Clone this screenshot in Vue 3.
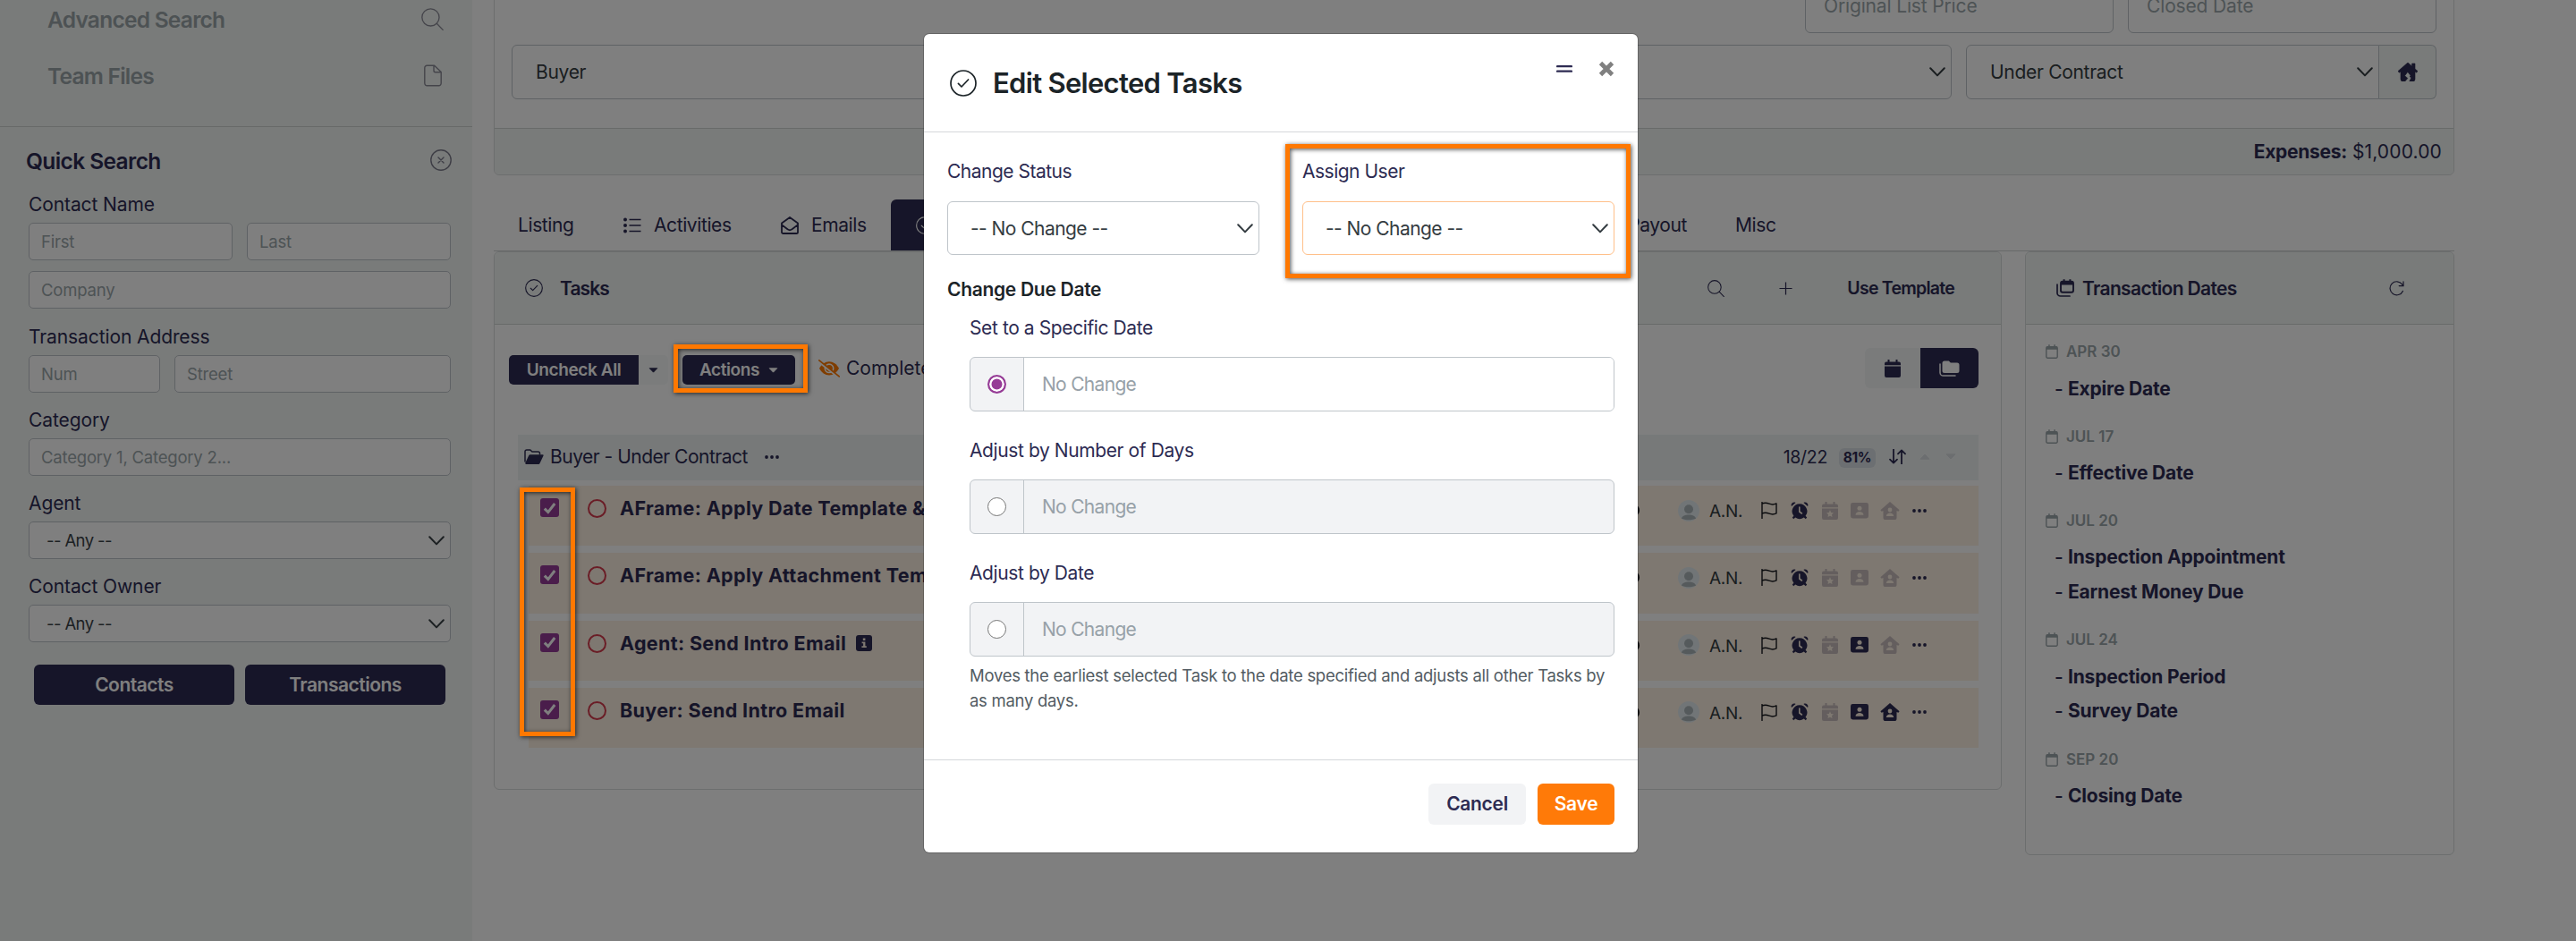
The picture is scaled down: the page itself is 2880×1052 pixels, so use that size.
<script setup>
  import { ref } from 'vue'

  const specificDate = ref('specific')

  const tasks = [
    { name: 'AFrame: Apply Date Template &', info: false, card: false, house: false },
    { name: 'AFrame: Apply Attachment Tem', info: false, card: false, house: false },
    { name: 'Agent: Send Intro Email', info: true, card: true, house: false },
    { name: 'Buyer: Send Intro Email', info: false, card: true, house: true },
  ]

  const dates = [
    { day: 'APR 30', events: ['Expire Date'] },
    { day: 'JUL 17', events: ['Effective Date'] },
    { day: 'JUL 20', events: ['Inspection Appointment', 'Earnest Money Due'] },
    { day: 'JUL 24', events: ['Inspection Period', 'Survey Date'] },
    { day: 'SEP 20', events: ['Closing Date'] },
  ]

  const dueOptions = [
    { id: 'specific', label: 'Set to a Specific Date' },
    { id: 'days', label: 'Adjust by Number of Days' },
    { id: 'date', label: 'Adjust by Date' },
  ]
</script>

<template>
  <div class="app">
    <svg class="sprite">
      <symbol id="search" viewBox="0 0 24 24">
        <g fill="none" stroke="currentColor" stroke-width="1.3" stroke-linecap="round"><circle cx="10" cy="10" r="9.2"/><path d="M16.6 16.6l6.6 6.8"/></g>
      </symbol>
      <symbol id="file" viewBox="0 0 20 24">
        <path d="M4 .8h7.6L19.2 8v12.6a2.6 2.6 0 0 1-2.6 2.6H3.4a2.6 2.6 0 0 1-2.6-2.6V3.4A2.6 2.6 0 0 1 3.4.8zM11 .8v5.6c0 1 .8 1.8 1.8 1.8h6" fill="none" stroke="currentColor" stroke-width="1.4" stroke-linejoin="round"/>
      </symbol>
      <symbol id="circle-x" viewBox="0 0 24 24">
        <g fill="none" stroke="currentColor" stroke-width="1.4" stroke-linecap="round"><circle cx="12" cy="12" r="11.2"/><path d="M9 9l6 6M15 9l-6 6"/></g>
      </symbol>
      <symbol id="circle-check" viewBox="0 0 30 30">
        <g fill="none" stroke="currentColor" stroke-width="1.7" stroke-linecap="round" stroke-linejoin="round"><circle cx="15" cy="15" r="14"/><path d="M9.4 15.4l3.6 3.6 7.6-8"/></g>
      </symbol>
      <symbol id="chevron" viewBox="0 0 18 11">
        <path d="M1.2 1.2L9 9.4l7.8-8.2" fill="none" stroke="currentColor" stroke-width="2" stroke-linecap="round" stroke-linejoin="round"/>
      </symbol>
      <symbol id="caret" viewBox="0 0 12 7"><path d="M1 .8h10L6 6z" fill="currentColor" stroke="currentColor" stroke-linejoin="round"/></symbol>
      <symbol id="home" viewBox="0 0 22 21">
        <path d="M11 0L0 9.6l1.4 1.6L3 10v8.4A2.6 2.6 0 0 0 5.6 21h2.2l3-3.6-3.2-2.6 3.2-4.4 3.4 4.2-1.2.8 1.8 1.6-2 4h3.6a2.6 2.6 0 0 0 2.6-2.6V10l1.6 1.2L22 9.6 19 7V1h-3.4v3z" fill="currentColor" stroke="currentColor" stroke-width=".6" stroke-linejoin="round"/>
      </symbol>
      <symbol id="list" viewBox="0 0 20 18">
        <g fill="currentColor"><circle cx="2" cy="2.5" r="2"/><circle cx="2" cy="9" r="2"/><circle cx="2" cy="15.5" r="2"/></g>
        <path d="M6.5 2.5h13M6.5 9h13M6.5 15.5h13" stroke="currentColor" stroke-width="1.6"/>
      </symbol>
      <symbol id="envelope" viewBox="0 0 20 20">
        <path d="M1 7.6L10 1l9 6.6v9.8a1.6 1.6 0 0 1-1.6 1.6H2.6A1.6 1.6 0 0 1 1 17.4zM1.2 9.6l6.6 4.8c1.3 1 3.1 1 4.4 0l6.6-4.8" fill="none" stroke="currentColor" stroke-width="1.8" stroke-linejoin="round"/>
      </symbol>
      <symbol id="plus" viewBox="0 0 16 16"><path d="M8 .5v15M.5 8h15" stroke="currentColor" stroke-width="1.3"/></symbol>
      <symbol id="calendars" viewBox="0 0 20 20">
        <path d="M7 2.8h10a2 2 0 0 1 2 2v8a2 2 0 0 1-2 2H7a2 2 0 0 1-2-2v-8a2 2 0 0 1 2-2z" fill="none" stroke="currentColor" stroke-width="1.9"/>
        <path d="M5 3h14v3.6H5zM7.6.2h2v3h-2zM14.4.2h2v3h-2z" fill="currentColor"/>
        <path d="M1 6v9.4A3.6 3.6 0 0 0 4.6 19H15" fill="none" stroke="currentColor" stroke-width="1.7" stroke-linecap="round"/>
      </symbol>
      <symbol id="refresh" viewBox="0 0 17 17">
        <path d="M15.4 11.4A7.5 7.5 0 1 1 14.6 3.8L16 5.6M16 .8v4.8h-4.8" fill="none" stroke="currentColor" stroke-width="1.2" stroke-linecap="round"/>
      </symbol>
      <symbol id="calendar" viewBox="0 0 14 16">
        <path d="M2.2 2.6h9.6A1.4 1.4 0 0 1 13.2 4v9.8a1.4 1.4 0 0 1-1.4 1.4H2.2a1.4 1.4 0 0 1-1.4-1.4V4a1.4 1.4 0 0 1 1.4-1.4z" fill="none" stroke="currentColor" stroke-width="1.4"/>
        <path d="M1 2.6h12v3.2H1zM3.2.3h1.5v3H3.2zM9.3.3h1.5v3H9.3z" fill="currentColor"/>
      </symbol>
      <symbol id="calendar-solid" viewBox="0 0 18 20">
        <path d="M0 4.5a2 2 0 0 1 2-2h1.5v-2a.8.8 0 0 1 2 0v2h7v-2a.8.8 0 0 1 2 0v2H16a2 2 0 0 1 2 2v1.8H0zM0 7.5h18V18a2 2 0 0 1-2 2H2a2 2 0 0 1-2-2z" fill="currentColor"/>
      </symbol>
      <symbol id="folders" viewBox="0 0 23 18">
        <path d="M6 .5h4.8l2 2H20A2.5 2.5 0 0 1 22.5 5v6.5A2.5 2.5 0 0 1 20 14H6a2.500 2.500 0 0 1-2.500-2.500V3A2.500 2.500 0 0 1 6 .5z" fill="currentColor"/>
        <path d="M1 4v9.4A3.6 3.6 0 0 0 4.6 17H18" fill="none" stroke="currentColor" stroke-width="1.5" stroke-linecap="round"/>
      </symbol>
      <symbol id="folder-open" viewBox="0 0 22 17">
        <path d="M1 14.500V2.800A1.800 1.800 0 0 1 2.800 1h4L9 3h6.700a1.800 1.800 0 0 1 1.800 1.800v1.600" fill="none" stroke="currentColor" stroke-width="1.5"/>
        <path d="M6.8 6.300h13.900a.9.9 0 0 1 .8 1.300l-4 8.400a1.400 1.400 0 0 1-1.300.9H2.200c-.8 0-1.200-.7-.9-1.400L5.200 7.200a1.700 1.700 0 0 1 1.600-.9z" fill="currentColor"/>
      </symbol>
      <symbol id="dots" viewBox="0 0 16 4"><g fill="currentColor"><circle cx="2" cy="2" r="1.9"/><circle cx="8" cy="2" r="1.9"/><circle cx="14" cy="2" r="1.9"/></g></symbol>
      <symbol id="eye-slash" viewBox="0 0 24 20">
        <path d="M1 9.800C3.500 5 7.500 2.200 12 2.200S20.500 5 23 9.800C20.500 14.700 16.500 17.500 12 17.500S3.500 14.700 1 9.800z" fill="currentColor"/>
        <circle cx="12" cy="9.8" r="4.7" fill="none" stroke="#fff" stroke-width="1.6"/>
        <path d="M0 2.200L22.500 19.800" stroke="#fff" stroke-width="2.4"/>
        <path d="M.8.900L23.200 18.900" stroke="currentColor" stroke-width="1.8" stroke-linecap="round"/>
      </symbol>
      <symbol id="sort" viewBox="0 0 19 17">
        <path d="M5 .5v15M1 11.600l4 4 4-4M14 16.500V1.500M10 5.400l4-4 4 4" fill="none" stroke="currentColor" stroke-width="1.8" stroke-linecap="round" stroke-linejoin="round"/>
      </symbol>
      <symbol id="check" viewBox="0 0 15 14"><path d="M1.800 7.600l4 4L13.200 2" fill="none" stroke="currentColor" stroke-width="3"/></symbol>
      <symbol id="info" viewBox="0 0 18 18">
        <rect width="18" height="18" rx="3" fill="currentColor"/>
        <path d="M7.800 3.600h2.600V6H7.800zM6.600 7.500h3.800v4.800h1.400V14H6.400v-1.700h1.700V9.200H6.600z" fill="#fcf0e2"/>
      </symbol>
      <symbol id="flag" viewBox="0 0 18 19">
        <path d="M1 .5v18M1 2.200c3-1.600 5.400-1 8 0s5 1.200 8-.3v11c-3 1.500-5.400 1.300-8 .3s-5-1.600-8 0" fill="none" stroke="currentColor" stroke-width="1.4" stroke-linejoin="round" stroke-linecap="round"/>
      </symbol>
      <symbol id="alarm" viewBox="0 0 20 20">
        <path d="M10 2.200a8.400 8.400 0 0 1 6.600 13.600l1.600 1.800-1.400 1.600-2-1.600a8.400 8.400 0 0 1-9.600 0l-2 1.600-1.400-1.600 1.600-1.800A8.400 8.400 0 0 1 10 2.200zM5.600.9L1 5C-.5 2.600 2.400-.8 5.600.9zM14.400.9L19 5c1.500-2.400-1.400-5.800-4.600-4.100z" fill="currentColor"/>
        <path d="M9.800 6v5l2.600 2" fill="none" stroke="#fcf0e2" stroke-width="1.6" stroke-linecap="round"/>
      </symbol>
      <symbol id="calendar-star" viewBox="0 0 18 20">
        <path d="M0 4.500a2 2 0 0 1 2-2h1.500v-2a.8.8 0 0 1 2 0v2h7v-2a.8.8 0 0 1 2 0v2H16a2 2 0 0 1 2 2v1.800H0zM0 7.500h18V18a2 2 0 0 1-2 2H2a2 2 0 0 1-2-2z" fill="currentColor"/>
        <path d="M9 9.300l1.200 2.600 2.800.4-2 2 .5 2.800L9 15.800l-2.500 1.300.5-2.800-2-2 2.800-.4z" fill="#fcf0e2"/>
      </symbol>
      <symbol id="contact-card" viewBox="0 0 20 18">
        <rect width="20" height="17.5" rx="2.4" fill="currentColor"/>
        <g fill="#fcf0e2"><circle cx="10" cy="6.2" r="2.5"/><path d="M5.500 13.800c0-5 9-5 9 0z"/></g>
      </symbol>
      <symbol id="house-user" viewBox="0 0 22 20">
        <path d="M11 0l10.600 9.200-1.200 1.600-1.900-.8v7.400a2.600 2.600 0 0 1-2.600 2.600H6.100a2.600 2.600 0 0 1-2.600-2.600V10l-1.900.8L.4 9.200z" fill="currentColor"/>
        <g fill="#fcf0e2"><circle cx="11" cy="9" r="2.4"/><path d="M6.800 16c0-4.800 8.400-4.800 8.400 0z"/></g>
      </symbol>
      <symbol id="avatar" viewBox="0 0 24 24">
        <circle cx="12" cy="12" r="12" fill="#e3ebee"/>
        <circle cx="12" cy="10.2" r="5" fill="#abb4b8"/><path d="M3.800 20.500c2-5.500 14.400-5.500 16.400 0-4 2.400-12.400 2.400-16.400 0z" fill="#abb4b8"/>
      </symbol>
    </svg>

    <aside class="sidebar">
      <nav class="side-nav">
        <div class="side-link"><span>Advanced Search</span><svg class="ico" width="25" height="25"><use href="#search"/></svg></div>
        <div class="side-link"><span>Team Files</span><svg class="ico file" width="20" height="25"><use href="#file"/></svg></div>
      </nav>
      <div class="quick">
        <div class="quick-head"><span>Quick Search</span><svg width="24" height="24"><use href="#circle-x"/></svg></div>
        <label>Contact Name</label>
        <div class="pair">
          <div class="input">First</div>
          <div class="input">Last</div>
        </div>
        <div class="input company">Company</div>
        <label>Transaction Address</label>
        <div class="pair address">
          <div class="input">Num</div>
          <div class="input">Street</div>
        </div>
        <label>Category</label>
        <div class="input">Category 1, Category 2...</div>
        <label>Agent</label>
        <div class="input pick"><span>-- Any --</span><svg width="18" height="11"><use href="#chevron"/></svg></div>
        <label>Contact Owner</label>
        <div class="input pick"><span>-- Any --</span><svg width="18" height="11"><use href="#chevron"/></svg></div>
        <div class="quick-actions">
          <div class="btn-navy">Contacts</div>
          <div class="btn-navy">Transactions</div>
        </div>
      </div>
    </aside>

    <main class="content">
      <section class="card summary">
        <div class="summary-row right">
          <div class="field price">Original List Price</div>
          <div class="field price">Closed Date</div>
        </div>
        <div class="summary-row">
          <div class="field select side"><span>Buyer</span><svg width="18" height="11"><use href="#chevron"/></svg></div>
          <div class="status">
            <div class="field select"><span>Under Contract</span><svg width="18" height="11"><use href="#chevron"/></svg></div>
            <div class="home"><svg width="22" height="21"><use href="#home"/></svg></div>
          </div>
        </div>
        <div class="summary-foot"><b>Expenses:</b><span>$1,000.00</span></div>
      </section>

      <nav class="tabs">
        <div class="tab listing">Listing</div>
        <div class="tab activities"><svg width="20" height="18"><use href="#list"/></svg>Activities</div>
        <div class="tab emails"><svg width="20" height="20"><use href="#envelope"/></svg>Emails</div>
        <div class="tab active"><svg width="20" height="20"><use href="#circle-check"/></svg></div>
        <div class="tab payout">Payout</div>
        <div class="tab misc">Misc</div>
      </nav>

      <div class="panels">
        <section class="card tasks">
          <header class="panel-head">
            <svg width="20" height="20"><use href="#circle-check"/></svg>
            <span class="panel-title">Tasks</span>
            <div class="head-tools">
              <svg width="19" height="19"><use href="#search"/></svg>
              <svg width="15" height="15"><use href="#plus"/></svg>
              <b>Use Template</b>
            </div>
          </header>
          <div class="toolbar">
            <div class="uncheck">Uncheck All</div>
            <div class="uncheck-more"><svg width="11" height="6"><use href="#caret"/></svg></div>
            <div class="actions">Actions<svg width="11" height="6"><use href="#caret"/></svg></div>
            <div class="completed"><svg width="24" height="20"><use href="#eye-slash"/></svg>Completed</div>
            <div class="view-toggle">
              <div class="by-date"><svg width="18" height="20"><use href="#calendar-solid"/></svg></div>
              <div class="by-folder"><svg width="23" height="18"><use href="#folders"/></svg></div>
            </div>
          </div>
          <div class="group">
            <div class="group-head">
              <svg width="22" height="17"><use href="#folder-open"/></svg>
              <span class="group-name">Buyer - Under Contract</span>
              <svg width="16" height="4"><use href="#dots"/></svg>
              <div class="group-stats">
                <span class="count">18/22</span>
                <span class="badge">81%</span>
                <svg class="sort" width="19" height="17"><use href="#sort"/></svg>
                <svg class="move up" width="12" height="7"><use href="#caret"/></svg>
                <svg class="move" width="12" height="7"><use href="#caret"/></svg>
              </div>
            </div>
            <div v-for="task in tasks" :key="task.name" class="task">
              <div class="checkbox"><svg width="15" height="14"><use href="#check"/></svg></div>
              <div class="ring"></div>
              <span class="task-name">{{ task.name }}</span>
              <svg v-if="task.info" class="info" width="18" height="18"><use href="#info"/></svg>
              <div class="task-meta">
                <i class="dot"></i>
                <svg width="24" height="24"><use href="#avatar"/></svg>
                <span>A.N.</span>
                <svg class="black" width="18" height="19"><use href="#flag"/></svg>
                <svg width="20" height="20"><use href="#alarm"/></svg>
                <svg class="dim" width="18" height="20"><use href="#calendar-star"/></svg>
                <svg :class="{ dim: !task.card }" width="20" height="18"><use href="#contact-card"/></svg>
                <svg :class="{ dim: !task.house }" width="22" height="20"><use href="#house-user"/></svg>
                <svg width="16" height="4"><use href="#dots"/></svg>
              </div>
            </div>
          </div>
        </section>

        <section class="card dates">
          <header class="panel-head">
            <svg width="20" height="20"><use href="#calendars"/></svg>
            <span class="panel-title">Transaction Dates</span>
            <svg class="refresh" width="17" height="17"><use href="#refresh"/></svg>
          </header>
          <div class="date-list">
            <div v-for="date in dates" :key="date.day" class="date">
              <div class="day"><svg width="14" height="16"><use href="#calendar"/></svg>{{ date.day }}</div>
              <div v-for="event in date.events" :key="event" class="event"><i>-</i>{{ event }}</div>
            </div>
          </div>
        </section>
      </div>
    </main>

    <div class="backdrop"></div>
    <div class="highlight on-actions"></div>
    <div class="highlight on-checks"></div>

    <div class="modal">
      <header class="modal-head">
        <svg width="30" height="30"><use href="#circle-check"/></svg>
        <h1>Edit Selected Tasks</h1>
        <div class="modal-tools">
          <svg width="18" height="8" viewBox="0 0 18 8"><path d="M1 1.200h16M1 6.600h16" stroke="#2d2b52" stroke-width="2.2" stroke-linecap="round"/></svg>
          <svg width="18" height="18" viewBox="0 0 18 18"><path d="M2.500 2.500l13 13M15.500 2.500l-13 13" stroke="#808080" stroke-width="4.8"/></svg>
        </div>
      </header>
      <div class="modal-body">
        <div class="modal-cols">
          <div>
            <p class="modal-label">Change Status</p>
            <div class="field select"><span>-- No Change --</span><svg width="18" height="11"><use href="#chevron"/></svg></div>
          </div>
          <div>
            <p class="modal-label">Assign User</p>
            <div class="field select focused"><span>-- No Change --</span><svg width="18" height="11"><use href="#chevron"/></svg></div>
          </div>
        </div>
        <h2>Change Due Date</h2>
        <div v-for="option in dueOptions" :key="option.id" class="due">
          <p>{{ option.label }}</p>
          <div class="due-group" :class="{ chosen: specificDate === option.id }" @click="specificDate = option.id">
            <div class="due-radio"><span class="radio"></span></div>
            <div class="due-value">No Change</div>
          </div>
        </div>
        <p class="help">Moves the earliest selected Task to the date specified and adjusts all other Tasks by<br>as many days.</p>
      </div>
      <footer class="modal-foot">
        <div class="cancel">Cancel</div>
        <div class="save">Save</div>
      </footer>
    </div>
    <div class="highlight on-assign"></div>
  </div>
</template>

<style>
  body{
    margin: 0;
    background: #808080;
  }
</style>

<style scoped>
  *{
    box-sizing: border-box;
  }
  .app{
    position: relative;
    display: flex;
    width: 2880px;
    height: 1052px;
    overflow: hidden;
    background: #fff;
    color: #2d2b52;
    font-family: Inter, "Liberation Sans", sans-serif;
    font-size: 21px;
    letter-spacing: -0.3px;
    white-space: nowrap;
  }
  svg{
    display: block;
    flex-shrink: 0;
  }
  .sprite{
    position: absolute;
    width: 0;
    height: 0;
  }
  p, h1, h2{
    margin: 0;
  }

  /* sidebar */
  .sidebar{
    width: 528px;
    height: 1052px;
    flex-shrink: 0;
    background: #f2f6f4;
  }
  .side-nav{
    height: 142px;
    border-bottom: 1px solid #d0d5d3;
    overflow: hidden;
  }
  .side-link{
    display: flex;
    align-items: center;
    justify-content: space-between;
    height: 63px;
    padding: 0 32px 0 53px;
    font-size: 24.5px;
    font-weight: 600;
    letter-spacing: -0.75px;
    color: #9aa5a8;
  }
  .side-link:first-child{
    margin-top: -10px;
  }
  .side-link .ico{
    color: #8a8a96;
  }
  .side-link .file{
    margin-right: 2px;
  }
  .quick{
    padding: 0 24px 0 32px;
  }
  .quick-head{
    display: flex;
    align-items: center;
    justify-content: space-between;
    height: 68px;
    margin: 0 -1px 0 -3px;
    padding-top: 6px;
    font-size: 24.5px;
    font-weight: 600;
    letter-spacing: -0.6px;
  }
  .quick-head span{
    padding-top: 2px;
  }
  .quick-head svg{
    color: #7d7d8c;
  }
  .quick label{
    display: block;
    height: 39px;
    line-height: 38px;
    letter-spacing: -0.1px;
  }
  .input{
    display: flex;
    align-items: center;
    height: 42px;
    margin-bottom: 12.3px;
    padding: 0 13px;
    border: 1px solid #bfc5ca;
    border-radius: 5px;
    background: #fff;
    font-size: 18.5px;
    letter-spacing: -0.2px;
    color: #9ba6aa;
  }
  .pair{
    display: grid;
    grid-template-columns: 228px 228px;
    gap: 16px;
  }
  .pair.address{
    grid-template-columns: 147px 309px;
  }
  .pick{
    justify-content: space-between;
    padding: 0 6px 0 19px;
    letter-spacing: -0.6px;
    color: #3a4247;
  }
  .quick-actions{
    display: flex;
    gap: 12px;
    margin: 25px 6px 0;
  }
  .btn-navy{
    width: 224px;
    height: 45px;
    line-height: 45px;
    border-radius: 6px;
    background: #2d2b52;
    color: #fff;
    font-weight: 600;
    letter-spacing: -0.5px;
    text-align: center;
  }

  /* transaction summary */
  .content{
    display: flex;
    flex-direction: column;
    width: 2192px;
    margin-left: 24px;
  }
  .card{
    border: 1px solid #d8dcdc;
    border-radius: 6px;
    background: #fff;
  }
  .summary{
    height: 240px;
    margin-top: -44px;
    padding-top: 19px;
  }
  .summary-row{
    display: flex;
    gap: 16px;
    margin-bottom: 13px;
    padding: 0 19px;
  }
  .summary-row.right{
    justify-content: flex-end;
  }
  .field{
    display: flex;
    align-items: center;
    height: 61px;
    padding: 0 20px;
    border: 1px solid #bfc5ca;
    border-radius: 6px;
    color: #9ba6aa;
  }
  .price{
    width: 345px;
    letter-spacing: -0.15px;
  }
  .select{
    justify-content: space-between;
    padding: 0 6px 0 26px;
    color: #343c41;
  }
  .side{
    width: 1610px;
  }
  .status{
    display: flex;
    width: 526px;
  }
  .status .field{
    flex: 1;
    border-radius: 6px 0 0 6px;
  }
  .home{
    display: flex;
    align-items: center;
    justify-content: center;
    width: 64px;
    border: 1px solid #bfc5ca;
    border-left: 0;
    border-radius: 0 6px 6px 0;
    background: #f2f6f4;
  }
  .summary-foot{
    display: flex;
    align-items: center;
    justify-content: flex-end;
    gap: 6px;
    height: 52px;
    margin-top: 32px;
    padding-right: 13px;
    padding-bottom: 1px;
    border-top: 1px solid #d0d5d3;
    border-radius: 0 0 6px 6px;
    background: #f2f6f4;
  }
  .summary-foot span{
    letter-spacing: 0.15px;
  }

  /* tabs */
  .tabs{
    display: flex;
    align-items: flex-end;
    height: 85px;
    padding-right: 732px;
    border-bottom: 1px solid #cfd3d3;
  }
  .tab{
    display: flex;
    align-items: center;
    gap: 14px;
    height: 57px;
    letter-spacing: -0.4px;
  }
  .listing{
    width: 145px;
    padding-left: 27px;
  }
  .activities{
    width: 176px;
  }
  .emails{
    width: 123px;
  }
  .tab.active{
    width: 138px;
    padding-left: 28px;
    border-radius: 6px 6px 0 0;
    background: #2d2b52;
    color: #fff;
  }
  .payout{
    margin-left: auto;
    padding-right: 28px;
  }
  .misc{
    width: 98px;
    padding-left: 26px;
  }

  /* panels */
  .panels{
    display: flex;
    align-items: flex-start;
    gap: 26px;
  }
  .tasks{
    width: 1686px;
    height: 602px;
  }
  .dates{
    width: 480px;
    height: 675px;
  }
  .panel-head{
    display: flex;
    align-items: center;
    height: 81px;
    padding: 0 52px 0 34px;
    border-bottom: 1px solid #d0d5d3;
    border-radius: 6px 6px 0 0;
    background: #f2f6f4;
  }
  .panel-title{
    margin-left: 19px;
    font-weight: 600;
    letter-spacing: -0.9px;
  }
  .head-tools{
    display: flex;
    align-items: center;
    margin-left: auto;
  }
  .head-tools svg:nth-child(2){
    margin: 0 61px;
  }
  .head-tools b{
    font-size: 19.5px;
    font-weight: 600;
    letter-spacing: -0.75px;
  }
  .toolbar{
    display: flex;
    align-items: center;
    height: 45px;
    margin: 26px 25px 0 16px;
  }
  .uncheck, .uncheck-more, .actions{
    display: flex;
    align-items: center;
    justify-content: center;
    height: 33px;
    margin-top: 4px;
    background: #2d2b52;
    color: #fff;
    font-size: 19px;
    font-weight: 600;
    letter-spacing: -0.4px;
  }
  .uncheck{
    width: 145px;
    border-radius: 5px 0 0 5px;
  }
  .uncheck-more{
    width: 33px;
    border-radius: 0 5px 5px 0;
    background: #f6f9f8;
    color: #2d2b52;
  }
  .actions{
    gap: 10px;
    width: 126px;
    margin-left: 16px;
    border-radius: 5px;
  }
  .completed{
    display: flex;
    align-items: center;
    gap: 7px;
    margin-left: 26px;
    letter-spacing: 0;
  }
  .completed svg{
    color: #ff7a00;
  }
  .view-toggle{
    display: flex;
    margin-left: auto;
  }
  .by-date, .by-folder{
    display: flex;
    align-items: center;
    justify-content: center;
    width: 62px;
    height: 45px;
    border-radius: 6px 0 0 6px;
    background: #f4f7f6;
  }
  .by-folder{
    width: 65px;
    border-radius: 0 6px 6px 0;
    background: #2d2b52;
    color: #fff;
  }
  .group{
    margin: 52px 25px 0 26px;
  }
  .group-head{
    display: flex;
    align-items: center;
    height: 51px;
    margin-bottom: 6px;
    padding: 0 25px 2px 7px;
    background: #eef3f2;
  }
  .group-name{
    width: 221px;
    margin: 0 19px 0 7px;
    letter-spacing: -0.5px;
  }
  .group-stats{
    display: flex;
    align-items: center;
    margin-left: auto;
  }
  .count{
    font-size: 19.5px;
  }
  .badge{
    width: 41px;
    height: 22px;
    margin: 2px 15px 0 13px;
    line-height: 22px;
    border-radius: 6px;
    background: #d9dee4;
    font-size: 15.5px;
    font-weight: 700;
    text-align: center;
  }
  .move{
    margin-left: 17px;
    color: #d9dde1;
  }
  .move.up{
    margin-left: 15px;
    transform: rotate(180deg);
  }
  .task{
    display: flex;
    height: 67.33px;
    margin: 0 0 8px 12px;
    padding: 15px 58px 0 13px;
    background: #fdf0e2;
  }
  .checkbox{
    display: flex;
    align-items: center;
    justify-content: center;
    width: 21px;
    height: 21px;
    margin-top: -1px;
    border-radius: 3px;
    background: #943a96;
    color: #fff;
  }
  .ring{
    width: 21px;
    height: 21px;
    margin-left: 32px;
    border: 2px solid #d43a4c;
    border-radius: 50%;
  }
  .task-name{
    height: 21px;
    margin-left: 15px;
    line-height: 21px;
    font-size: 21.5px;
    font-weight: 700;
    letter-spacing: 0.35px;
  }
  .info{
    margin: 1px 0 0 11px;
  }
  .task-meta{
    display: grid;
    grid-template-columns: 56px 35px 58px 33px 35px 32px 33px 36px 16px;
    align-items: center;
    height: 21px;
    margin-left: auto;
  }
  .task-meta span{
    padding-top: 2px;
    font-size: 19px;
    color: #343c41;
  }
  .dot{
    width: 11px;
    height: 13px;
    margin-left: 2px;
    border: 2px solid #14161c;
    border-radius: 50%;
  }
  .black{
    color: #14161c;
  }
  .dim{
    opacity: 0.25;
  }

  /* transaction dates */
  .dates .panel-head{
    padding-right: 55px;
  }
  .dates .panel-title{
    margin-left: 9px;
    letter-spacing: -0.65px;
  }
  .refresh{
    margin-left: auto;
  }
  .date-list{
    padding: 9px 22px;
  }
  .date{
    margin-bottom: 13.3px;
  }
  .day{
    display: flex;
    align-items: center;
    gap: 9px;
    height: 42.5px;
    font-size: 17px;
    font-weight: 600;
    letter-spacing: 0;
    color: #9ba6aa;
  }
  .event{
    display: flex;
    height: 38.7px;
    padding-left: 10px;
    line-height: 39px;
    font-weight: 700;
    letter-spacing: -0.2px;
  }
  .event i{
    width: 15px;
    font-style: normal;
    font-weight: 500;
  }

  /* overlay */
  .backdrop{
    position: absolute;
    inset: 0;
    background: rgba(0, 0, 0, 0.5);
  }
  .highlight{
    position: absolute;
    border: 5px solid #ff7800;
    box-shadow: 1px 1px 5px rgba(0, 0, 0, 0.7), inset 1px 1px 5px rgba(0, 0, 0, 0.7);
  }
  .on-actions{
    left: 753px;
    top: 385px;
    width: 150px;
    height: 54px;
  }
  .on-checks{
    left: 581px;
    top: 545px;
    width: 62px;
    height: 278px;
  }
  .on-assign{
    left: 1437px;
    top: 161px;
    width: 386px;
    height: 150px;
  }

  /* modal */
  .modal{
    position: absolute;
    left: 1033px;
    top: 38px;
    width: 798px;
    height: 915px;
    border-radius: 6px;
    background: #fff;
    box-shadow: 0 0 0 1px rgba(0, 0, 0, 0.2);
  }
  .modal-head{
    display: flex;
    align-items: center;
    height: 110px;
    padding: 0 26px 0 29px;
    border-bottom: 1px solid #d5d8da;
    color: #1c2428;
  }
  h1{
    margin-left: 18px;
    font-size: 31px;
    font-weight: 600;
    letter-spacing: -0.7px;
  }
  .modal-tools{
    display: flex;
    align-items: center;
    gap: 29px;
    margin: -31px 0 0 auto;
  }
  .modal-body{
    height: 701px;
    padding: 23px 26px 0;
  }
  .modal-cols{
    display: grid;
    grid-template-columns: 349px 349px;
    gap: 48px;
  }
  .modal-label{
    height: 54px;
    line-height: 42px;
    letter-spacing: -0.5px;
  }
  .modal .field{
    height: 60px;
    padding-left: 25px;
    letter-spacing: -0.55px;
  }
  .modal .focused{
    border-color: #ffc08a;
  }
  h2{
    margin-top: 22px;
    line-height: 33px;
    font-size: 21px;
    font-weight: 600;
    color: #1c2428;
  }
  .due{
    padding-left: 25px;
    margin-bottom: 17px;
  }
  .due p{
    height: 59px;
    line-height: 54px;
    letter-spacing: -0.4px;
  }
  .due-group{
    display: flex;
    height: 61px;
    border: 1px solid #bfc5ca;
    border-radius: 6px;
    background: #f2f3f5;
    color: #97a1a8;
    overflow: hidden;
  }
  .due-radio{
    display: flex;
    align-items: center;
    justify-content: center;
    width: 60px;
    border-right: 1px solid #bfc5ca;
  }
  .due-value{
    flex: 1;
    padding-left: 20px;
    line-height: 60px;
    letter-spacing: -0.7px;
  }
  .chosen .due-value{
    background: #fff;
  }
  .radio{
    width: 21px;
    height: 21px;
    border: 1.5px solid #767676;
    border-radius: 50%;
    background: #fff;
  }
  .chosen .radio{
    border: 2px solid #963c96;
    background: #963c96;
    box-shadow: inset 0 0 0 2.5px #fff;
  }
  .help{
    margin: -10px 0 0 25px;
    line-height: 28px;
    font-size: 18.5px;
    letter-spacing: -0.28px;
    color: #535c63;
  }
  .modal-foot{
    display: flex;
    justify-content: flex-end;
    gap: 13px;
    padding: 26px 26px 0;
    border-top: 1px solid #d5d8da;
  }
  .cancel, .save{
    width: 109px;
    height: 46px;
    line-height: 46px;
    border-radius: 6px;
    background: #f2f3f5;
    font-weight: 600;
    text-align: center;
  }
  .save{
    width: 86px;
    background: #ff7a08;
    color: #fff;
  }
</style>
